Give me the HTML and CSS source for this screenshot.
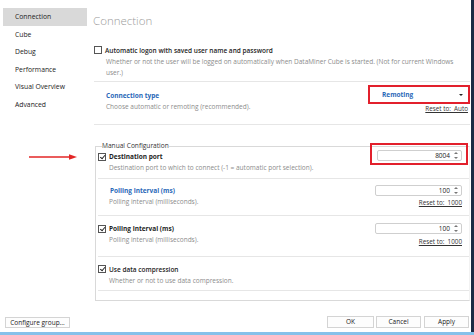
FILE: index.html
```html
<!DOCTYPE html>
<html>
<head>
<meta charset="utf-8">
<link rel="stylesheet" href="styles.css">
</head>
<body>
<div class="screen">
  <div class="window">
    <div class="main">
      <nav class="sidebar">
        <div class="nav-item active">Connection</div>
        <div class="nav-item">Cube</div>
        <div class="nav-item">Debug</div>
        <div class="nav-item">Performance</div>
        <div class="nav-item">Visual Overview</div>
        <div class="nav-item">Advanced</div>
      </nav>
      <section class="content">
        <h1 class="heading">Connection</h1>

        <div class="row row-logon">
          <div class="row-text">
            <div class="title"><span class="cb"></span><span class="t-dark">Automatic logon with saved user name and password</span></div>
            <div class="desc indent">Whether or not the user will be logged on automatically when DataMiner Cube is started. (Not for current Windows<br>user.)</div>
          </div>
        </div>
        <div class="sep"></div>

        <div class="row row-type">
          <div class="row-text">
            <div class="title indent t-blue">Connection type</div>
            <div class="desc indent">Choose automatic or remoting (recommended).</div>
          </div>
          <div class="ctrl ctrl-type">
            <div class="redbox redbox-select">
              <div class="select"><span class="select-val">Remoting</span><span class="select-arrow"></span></div>
            </div>
            <div class="reset reset-auto">Reset to:&nbsp; Auto</div>
          </div>
        </div>
        <div class="sep"></div>

        <fieldset class="group">
          <legend class="legend">Manual Configuration</legend>

          <div class="row grow row-port">
            <div class="row-text">
              <div class="title"><span class="cb checked"></span><span class="t-dark t-bold">Destination port</span></div>
              <div class="desc gindent">Destination port to which to connect (-1 = automatic port selection).</div>
            </div>
            <div class="ctrl ctrl-port">
              <div class="redbox redbox-port">
                <div class="num num-port"><span class="num-val">8004</span><span class="spin"></span></div>
              </div>
            </div>
          </div>
          <div class="sep"></div>

          <div class="row grow row-poll1">
            <div class="row-text">
              <div class="title gindent2 t-blue">Polling interval (ms)</div>
              <div class="desc gindent">Polling interval (milliseconds).</div>
            </div>
            <div class="ctrl">
              <div class="num"><span class="num-val">100</span><span class="spin"></span></div>
              <div class="reset">Reset to:&nbsp; 1000</div>
            </div>
          </div>
          <div class="sep"></div>

          <div class="row grow row-poll2">
            <div class="row-text">
              <div class="title"><span class="cb checked"></span><span class="t-dark t-bold">Polling interval (ms)</span></div>
              <div class="desc gindent">Polling interval (milliseconds).</div>
            </div>
            <div class="ctrl">
              <div class="num"><span class="num-val">100</span><span class="spin"></span></div>
              <div class="reset reset-2">Reset to:&nbsp; 1000</div>
            </div>
          </div>
          <div class="sep"></div>

          <div class="row grow row-comp">
            <div class="row-text">
              <div class="title"><span class="cb checked"></span><span class="t-dark">Use data compression</span></div>
              <div class="desc gindent">Whether or not to use data compression.</div>
            </div>
          </div>
          <div class="sep"></div>
        </fieldset>
      </section>
    </div>
    <div class="footer">
      <button class="btn btn-config">Configure group...</button>
      <div class="footer-right">
        <button class="btn btn-ok">OK</button>
        <button class="btn btn-cancel">Cancel</button>
        <button class="btn btn-apply">Apply</button>
      </div>
    </div>
    <svg class="arrow" width="50" height="8" viewBox="0 0 50 8">
      <line x1="0" y1="4" x2="42" y2="4" stroke="#e32626" stroke-width="1.4"/>
      <polygon points="40,1.2 48,4 40,6.8" fill="#e32626"/>
    </svg>
  </div>
  <div class="taskbar"></div>
</div>
</body>
</html>
```

FILE: styles.css
```css
* { box-sizing: border-box; }
html, body { margin: 0; padding: 0; }
body {
  width: 474px;
  height: 335px;
  overflow: hidden;
  background: #ffffff;
  font-family: "Open Sans", "Noto Sans", sans-serif;
  font-size: 6.5px;
  color: #222;
}
.screen {
  width: 474px;
  height: 335px;
  display: flex;
  flex-direction: column;
}
.window {
  position: relative;
  flex: 1;
  display: flex;
  flex-direction: column;
  background: #fff;
  border-right: 3px solid #1b2b44;
}
.taskbar {
  height: 3px;
  background: #86c1ea;
}
.main {
  flex: 1;
  display: flex;
}
.sidebar {
  width: 87px;
  padding: 8px 0 0 3px;
  flex: none;
}
.nav-item {
  height: 17.6px;
  line-height: 17.6px;
  padding-left: 12px;
  font-size: 6.8px;
  color: #222;
}
.nav-item.active {
  background: #d9d9d9;
}
.content {
  flex: 1;
  padding: 12px 1px 0 7px;
}
.heading {
  margin: 0 0 0 -1px;
  font-size: 11.5px;
  line-height: 18px;
  font-weight: 300;
  color: #9b9b9b;
}
.row {
  display: flex;
  justify-content: space-between;
  align-items: flex-start;
}
.row-text { flex: 1; }
.title {
  display: flex;
  align-items: center;
  height: 11px;
  line-height: 11px;
}
.t-dark { color: #1e1e1e; font-weight: 600; }
.t-bold { font-weight: 700; }
.t-blue { color: #2a68b8; font-weight: 700; }
.desc {
  line-height: 11px;
  color: #8c8c8c;
}
.indent { padding-left: 12px; }
.gindent { padding-left: 11px; }
.gindent2 { padding-left: 12px; }
.cb {
  width: 8px;
  height: 8px;
  border: 1px solid #555;
  background: #fff;
  margin-right: 3px;
  flex: none;
  position: relative;
}
.cb.checked::after {
  content: "";
  position: absolute;
  left: 1.6px;
  top: 0.2px;
  width: 2.2px;
  height: 4.3px;
  border-right: 1px solid #222;
  border-bottom: 1px solid #222;
  transform: rotate(40deg);
}
.sep {
  height: 1px;
  background: #e6e6e6;
}
.row-logon { margin-top: 14.5px; padding-bottom: 3.5px; }
.row-type { padding-top: 7.5px; padding-bottom: 9.5px; }
.ctrl {
  display: flex;
  flex-direction: column;
  align-items: flex-end;
}
.ctrl-type { margin-top: -4.5px; }
.redbox {
  border: 2px solid #e2202c;
}
.redbox-select {
  width: 102px;
  height: 19px;
  padding: 1px;
}
.select {
  height: 100%;
  display: flex;
  align-items: center;
  justify-content: space-between;
  padding: 0 4px 0 11px;
  background: #fff;
}
.select-val {
  color: #2a68b8;
  font-weight: 700;
}
.select-arrow {
  width: 0; height: 0;
  border-left: 2px solid transparent;
  border-right: 2px solid transparent;
  border-top: 2.5px solid #222;
}
.reset {
  line-height: 10px;
  color: #333;
  text-decoration: underline;
  font-size: 6.3px;
}
.reset-auto { margin-right: 2px; margin-top: 0; }
.group {
  margin: 16.5px 0 0 1px;
  padding: 0 0 9px 2px;
  border: 1px solid #d9d9d9;
  border-right-color: #f2f2f2;
  min-width: 0;
}
.legend {
  padding: 0;
  margin-left: 4px;
  line-height: 10px;
  color: #333;
  font-size: 6.6px;
}
.grow { padding-right: 7px; }
.row-port { padding-bottom: 4.5px; }
.ctrl-port { margin-top: -8.5px; }
.redbox-port {
  margin-right: -6px;
  width: 98px;
  height: 22px;
  padding: 5px 4px 2px 5px;
}
.num {
  width: 87px;
  height: 11px;
  border: 1px solid #cfcfcf;
  border-radius: 2px;
  background: #fff;
  display: flex;
  align-items: center;
  justify-content: flex-end;
  padding-right: 3px;
}
.num-port { width: 85px; }
.num-val { color: #222; margin-right: 4px; }
.spin {
  width: 4px;
  height: 7px;
  position: relative;
}
.spin::before, .spin::after {
  content: "";
  position: absolute;
  left: 0;
  width: 0; height: 0;
  border-left: 2px solid transparent;
  border-right: 2px solid transparent;
}
.spin::before { top: 0; border-bottom: 2.5px solid #777; }
.spin::after { bottom: 0; border-top: 2.5px solid #777; }
.row-poll1 { padding-top: 6px; padding-bottom: 7.5px; }
.row-poll1 .reset { margin-top: 2px; }
.row-poll2 { padding-top: 7px; padding-bottom: 9.5px; }
.row-poll2 .ctrl { margin-top: -0.5px; }
.reset-2 { margin-top: 3px; }
.row-comp { padding-top: 6.8px; padding-bottom: 4.5px; }
.footer {
  height: 23px;
  display: flex;
  justify-content: space-between;
  align-items: flex-start;
  padding: 8px 2px 0 5px;
}
.footer-right {
  display: flex;
  gap: 2px;
  margin-top: -1px;
}
.btn {
  font-family: inherit;
  font-size: 6.5px;
  height: 12px;
  padding: 0;
  border: 1px solid #d4d4d4;
  background: #fdfdfd;
  color: #222;
  line-height: 10px;
}
.btn-config { width: 65px; height: 11px; }
.btn-ok { width: 47px; }
.btn-cancel { width: 45px; }
.btn-apply { width: 45px; margin-left: 1px; }
.arrow {
  position: absolute;
  left: 29px;
  top: 153px;
}
```
